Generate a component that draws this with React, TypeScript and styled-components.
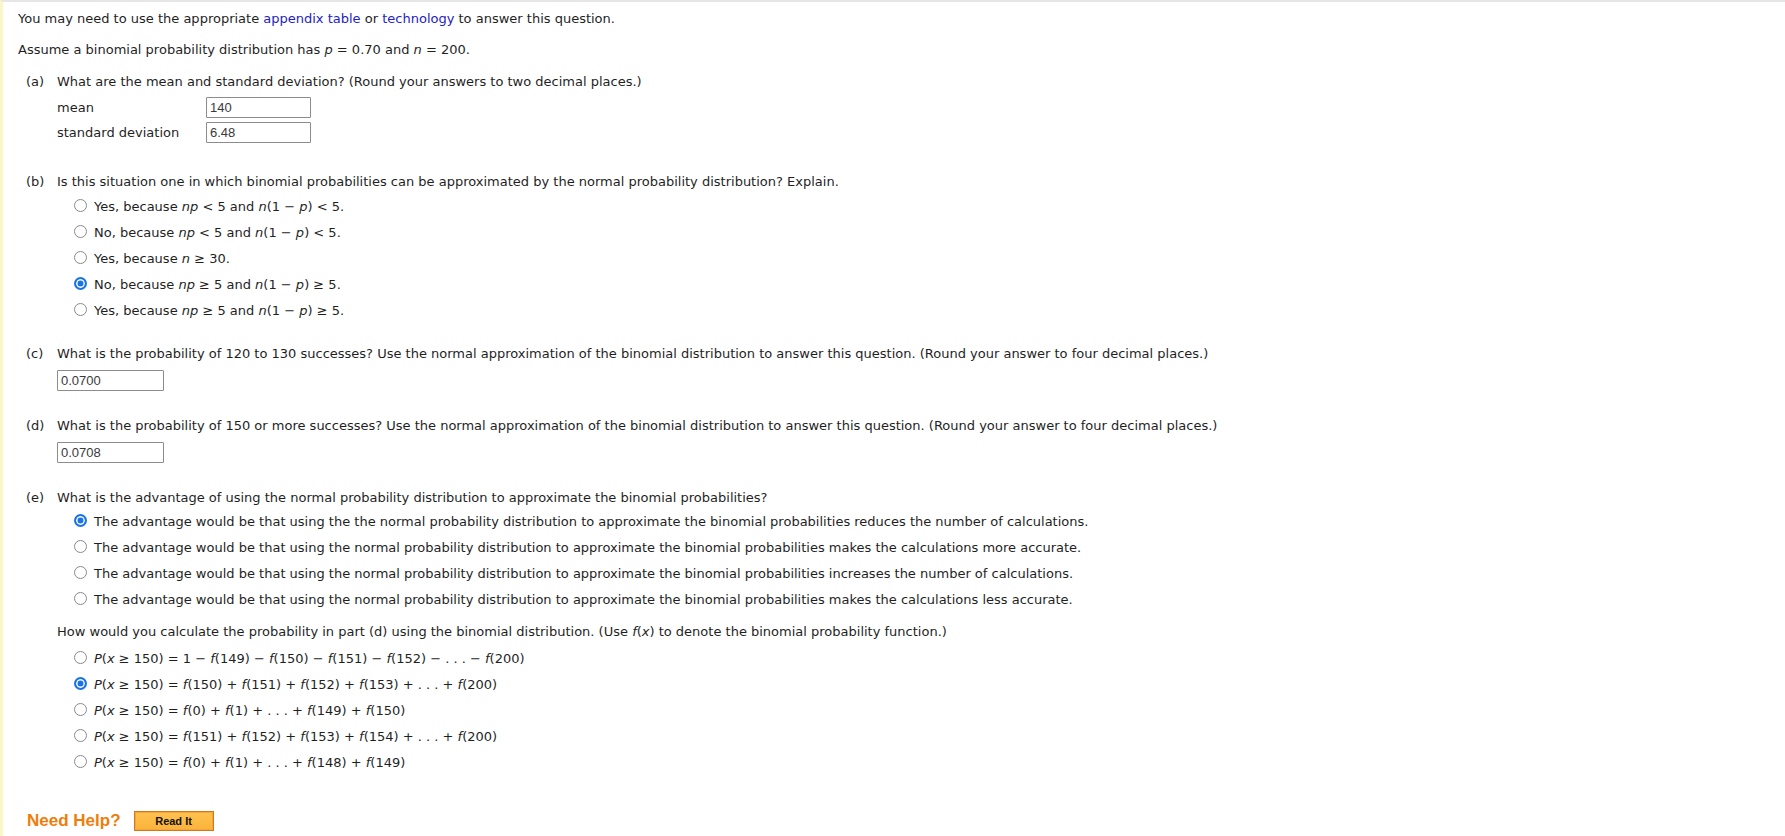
import React from 'react';
import styled, { createGlobalStyle, css } from 'styled-components';

const TEXT = '#1f1f1f';
const LINK = '#2222c8';
const MAIN_FONT = '"DejaVu Sans", Verdana, sans-serif';
const FIELD_FONT = '"Liberation Sans", Arial, sans-serif';

const GlobalStyle = createGlobalStyle`
  html, body {
    margin: 0;
    padding: 0;
    background: #ffffff;
  }
  body {
    font-family: ${MAIN_FONT};
    font-size: 13px;
    color: ${TEXT};
  }
`;

const Page = styled.div`
  min-height: 100vh;
  box-sizing: border-box;
  border-top: 2px solid #e6e6e6;
  border-left: 3px solid #fbf6c6;
  padding: 8px 0 0 15px;
`;

const Para = styled.p<{ $gap?: number }>`
  margin: ${p => p.$gap ?? 0}px 0 0;
  line-height: 18px;
  white-space: nowrap;
`;

const Link = styled.a`
  color: ${LINK};
  text-decoration: none;
`;

const Part = styled.div<{ $gap: number }>`
  display: grid;
  grid-template-columns: 31px 1fr;
  margin: ${p => p.$gap}px 0 0 8px;
`;

const PartLabel = styled.span`
  line-height: 18px;
`;

const PartBody = styled.div`
  display: flex;
  flex-direction: column;
`;

const AnswerGrid = styled.div`
  display: grid;
  grid-template-columns: 149px auto;
  grid-auto-rows: 25px;
  align-items: center;
  margin-top: 4px;
`;

const fieldStyles = css`
  box-sizing: border-box;
  width: 105px;
  height: 21px;
  border: 1px solid #8c8c8c;
  border-radius: 1px;
  padding: 0 3px;
  font-family: ${FIELD_FONT};
  font-size: 13px;
  color: #3a3a3a;
  background: #fff;

  &:focus {
    outline: none;
  }
`;

const Field = styled.input`
  ${fieldStyles}
`;

const SoloField = styled.input`
  ${fieldStyles}
  width: 107px;
  margin-top: 7px;
`;

const ChoiceList = styled.div<{ $gap: number }>`
  display: flex;
  flex-direction: column;
  margin: ${p => p.$gap}px 0 0 17px;
`;

const Choice = styled.label`
  display: flex;
  align-items: center;
  gap: 7px;
  height: 26px;
  white-space: nowrap;
`;

const Radio = styled.span<{ $checked?: boolean }>`
  box-sizing: border-box;
  flex: none;
  width: 13px;
  height: 13px;
  margin-top: -2px;
  border-radius: 50%;
  ${p =>
    p.$checked
      ? css`
          border: 2px solid #1b74e4;
          background: #1b74e4;
          box-shadow: inset 0 0 0 1.5px #fff;
        `
      : css`
          border: 1px solid #8a8a8a;
          background: #fff;
        `}
`;

const HelpBar = styled.div`
  display: flex;
  align-items: center;
  gap: 13px;
  margin: 36px 0 0 9px;
`;

const HelpTitle = styled.span`
  font-family: ${FIELD_FONT};
  font-weight: bold;
  font-size: 17px;
  color: #ef7d0a;
`;

const HelpButton = styled.button`
  box-sizing: border-box;
  width: 80px;
  height: 20px;
  padding: 0;
  border: 1px solid #d07a1c;
  box-shadow: inset 0 0 0 1px #f6a53a;
  background: linear-gradient(#ffc24f, #fbb33a);
  font-family: ${FIELD_FONT};
  font-weight: bold;
  font-size: 11px;
  color: #111;
  cursor: pointer;
`;

type Opt = { body: React.ReactNode; checked?: boolean };

const Choices = ({ gap, options }: { gap: number; options: Opt[] }) => (
  <ChoiceList $gap={gap}>
    {options.map((o, i) => (
      <Choice key={i}>
        <Radio $checked={o.checked} />
        <span>{o.body}</span>
      </Choice>
    ))}
  </ChoiceList>
);

const partB: Opt[] = [
  { body: <>Yes, because <i>np</i> &lt; 5 and <i>n</i>(1 − <i>p</i>) &lt; 5.</> },
  { body: <>No, because <i>np</i> &lt; 5 and <i>n</i>(1 − <i>p</i>) &lt; 5.</> },
  { body: <>Yes, because <i>n</i> ≥ 30.</> },
  { body: <>No, because <i>np</i> ≥ 5 and <i>n</i>(1 − <i>p</i>) ≥ 5.</>, checked: true },
  { body: <>Yes, because <i>np</i> ≥ 5 and <i>n</i>(1 − <i>p</i>) ≥ 5.</> },
];

const adv = 'The advantage would be that using the normal probability distribution to approximate the binomial probabilities';

const partE: Opt[] = [
  {
    body: 'The advantage would be that using the the normal probability distribution to approximate the binomial probabilities reduces the number of calculations.',
    checked: true,
  },
  { body: `${adv} makes the calculations more accurate.` },
  { body: `${adv} increases the number of calculations.` },
  { body: `${adv} makes the calculations less accurate.` },
];

const P = () => (
  <>
    <i>P</i>(<i>x</i> ≥ 150) ={' '}
  </>
);
const f = (n: number | string) => (
  <>
    <i>f</i>({n})
  </>
);

const partF: Opt[] = [
  {
    body: (
      <>
        <P />1 − {f(149)} − {f(150)} − {f(151)} − {f(152)} − . . . − {f(200)}
      </>
    ),
  },
  {
    body: (
      <>
        <P />
        {f(150)} + {f(151)} + {f(152)} + {f(153)} + . . . + {f(200)}
      </>
    ),
    checked: true,
  },
  {
    body: (
      <>
        <P />
        {f(0)} + {f(1)} + . . . + {f(149)} + {f(150)}
      </>
    ),
  },
  {
    body: (
      <>
        <P />
        {f(151)} + {f(152)} + {f(153)} + {f(154)} + . . . + {f(200)}
      </>
    ),
  },
  {
    body: (
      <>
        <P />
        {f(0)} + {f(1)} + . . . + {f(148)} + {f(149)}
      </>
    ),
  },
];

export default function App() {
  return (
    <>
      <GlobalStyle />
      <Page>
        <Para>
          You may need to use the appropriate <Link href="#">appendix table</Link> or{' '}
          <Link href="#">technology</Link> to answer this question.
        </Para>
        <Para $gap={13}>
          Assume a binomial probability distribution has <i>p</i> = 0.70 and <i>n</i> = 200.
        </Para>

        <Part $gap={14}>
          <PartLabel>(a)</PartLabel>
          <PartBody>
            <Para>What are the mean and standard deviation? (Round your answers to two decimal places.)</Para>
            <AnswerGrid>
              <span>mean</span>
              <Field defaultValue="140" />
              <span>standard deviation</span>
              <Field defaultValue="6.48" />
            </AnswerGrid>
          </PartBody>
        </Part>

        <Part $gap={28}>
          <PartLabel>(b)</PartLabel>
          <PartBody>
            <Para>
              Is this situation one in which binomial probabilities can be approximated by the normal probability
              distribution? Explain.
            </Para>
            <Choices gap={2} options={partB} />
          </PartBody>
        </Part>

        <Part $gap={22}>
          <PartLabel>(c)</PartLabel>
          <PartBody>
            <Para>
              What is the probability of 120 to 130 successes? Use the normal approximation of the binomial
              distribution to answer this question. (Round your answer to four decimal places.)
            </Para>
            <SoloField defaultValue="0.0700" />
          </PartBody>
        </Part>

        <Part $gap={26}>
          <PartLabel>(d)</PartLabel>
          <PartBody>
            <Para>
              What is the probability of 150 or more successes? Use the normal approximation of the binomial
              distribution to answer this question. (Round your answer to four decimal places.)
            </Para>
            <SoloField defaultValue="0.0708" />
          </PartBody>
        </Part>

        <Part $gap={26}>
          <PartLabel>(e)</PartLabel>
          <PartBody>
            <Para>What is the advantage of using the normal probability distribution to approximate the binomial probabilities?</Para>
            <Choices gap={1} options={partE} />
            <Para $gap={11}>
              How would you calculate the probability in part (d) using the binomial distribution. (Use <i>f</i>(
              <i>x</i>) to denote the binomial probability function.)
            </Para>
            <Choices gap={4} options={partF} />
          </PartBody>
        </Part>

        <HelpBar>
          <HelpTitle>Need Help?</HelpTitle>
          <HelpButton>Read It</HelpButton>
        </HelpBar>
      </Page>
    </>
  );
}
